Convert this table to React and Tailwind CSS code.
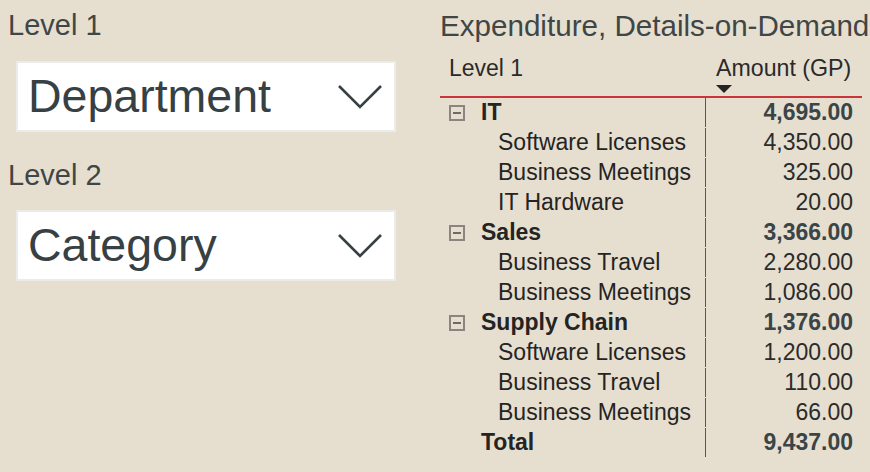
import React from "react";

const rows = [
  { label: "IT", value: "4,695.00", group: true },
  { label: "Software Licenses", value: "4,350.00" },
  { label: "Business Meetings", value: "325.00" },
  { label: "IT Hardware", value: "20.00" },
  { label: "Sales", value: "3,366.00", group: true },
  { label: "Business Travel", value: "2,280.00" },
  { label: "Business Meetings", value: "1,086.00" },
  { label: "Supply Chain", value: "1,376.00", group: true },
  { label: "Software Licenses", value: "1,200.00" },
  { label: "Business Travel", value: "110.00" },
  { label: "Business Meetings", value: "66.00" },
  { label: "Total", value: "9,437.00", total: true },
];

function Chevron() {
  return (
    <svg width="46" height="26" viewBox="0 0 46 26" fill="none">
      <path d="M2 2 L23 23 L44 2" stroke="#374043" strokeWidth="2.6" strokeLinecap="butt" strokeLinejoin="miter" />
    </svg>
  );
}

function Dropdown({ text }) {
  return (
    <div className="ml-[16px] flex h-[71px] w-[380px] items-center justify-between border-2 border-[#ebebe9] bg-white pl-[10px] pr-[11px]">
      <span className="text-[46.5px] leading-none text-[#374043]">{text}</span>
      <Chevron />
    </div>
  );
}

function Minus() {
  return (
    <div className="flex h-[16px] w-[16px] items-center justify-center border-2 border-[#8a8580]">
      <div className="h-[2px] w-[8px] bg-[#6e6a66]" />
    </div>
  );
}

export default function App() {
  return (
    <div
      className="flex h-[472px] w-[870px] overflow-hidden bg-[#e6dfd0]"
      style={{ fontFamily: '"Liberation Sans", Arial, sans-serif' }}
    >
      <div className="flex w-[440px] shrink-0 flex-col">
        <div className="ml-[8px] mt-[11px] text-[29px] leading-none text-[#404646]">Level 1</div>
        <div className="mt-[21px]">
          <Dropdown text="Department" />
        </div>
        <div className="ml-[8px] mt-[29px] text-[29px] leading-none text-[#404646]">Level 2</div>
        <div className="mt-[20px]">
          <Dropdown text="Category" />
        </div>
      </div>
      <div className="flex w-[430px] shrink-0 flex-col">
        <div className="mt-[11px] whitespace-nowrap text-[29.6px] leading-none text-[#404646]">
          Expenditure, Details-on-Demand
        </div>
        <div className="flex h-[57px] w-[422px] border-b-2 border-[#c8363b]">
          <div className="w-[266px] pl-[9px] pt-[16px] text-[23px] leading-none text-[#2a2a2a]">Level 1</div>
          <div className="flex flex-col pl-[10px] pt-[16px]">
            <span className="whitespace-nowrap text-[23.2px] leading-none text-[#2a2a2a]">Amount (GP)</span>
            <svg className="mt-[5px]" width="16" height="8" viewBox="0 0 16 8">
              <path d="M0 0 L16 0 L8 8 Z" fill="#252423" />
            </svg>
          </div>
        </div>
        <div className="flex w-[422px] flex-col">
          {rows.map((r, i) => (
            <div key={i} className="mb-px flex h-[29px] items-stretch text-[23px] leading-none">
              <div className="flex w-[266px] items-center border-r border-[#c8262d] pt-[1px]">
                {r.group ? (
                  <>
                    <div className="ml-[9px] w-[32px]">
                      <Minus />
                    </div>
                    <span className="font-bold text-[#252423]">{r.label}</span>
                  </>
                ) : r.total ? (
                  <span className="ml-[41px] font-bold text-[#252423]">{r.label}</span>
                ) : (
                  <span className="ml-[58px] text-[#252423]">{r.label}</span>
                )}
              </div>
              <div
                className={
                  "flex flex-1 items-center justify-end pr-[9px] pt-[1px] " +
                  (r.group || r.total ? "font-bold text-[#3b4446]" : "text-[#2b2b2b]")
                }
              >
                {r.value}
              </div>
            </div>
          ))}
        </div>
      </div>
    </div>
  );
}
